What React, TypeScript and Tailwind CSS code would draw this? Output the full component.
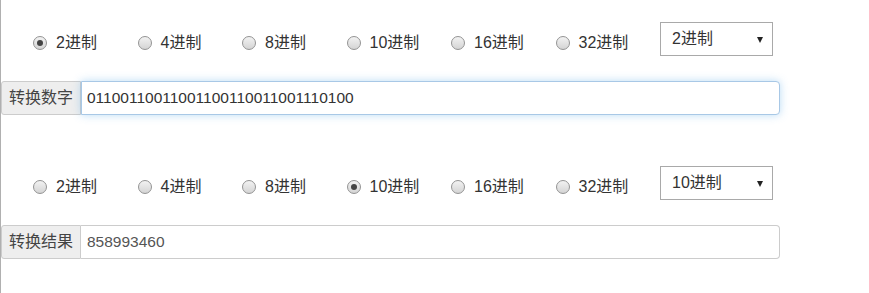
import * as React from "react";

const bases = [2, 4, 8, 10, 16, 32];

function Radio({ checked, label, onPick }: { checked: boolean; label: string; onPick: () => void }) {
  return (
    <label className="mt-[14px] flex w-[104.5px] cursor-pointer items-center" onClick={onPick}>
      <span className="flex h-[14px] w-[14px] items-center justify-center rounded-full border border-[#939393] bg-[linear-gradient(#f2f2f2,#d4d4d4)]">
        {checked && <span className="h-[6px] w-[6px] rounded-full bg-[#444]" />}
      </span>
      <span className="ml-[9px] text-[16px] leading-[14px] text-[#333]">{label}</span>
    </label>
  );
}

function BaseRow({ value, onChange }: { value: number; onChange: (v: number) => void }) {
  return (
    <div className="flex h-[34px] items-start pl-[32px]">
      {bases.map((b) => (
        <Radio key={b} checked={b === value} label={`${b}进制`} onPick={() => onChange(b)} />
      ))}
      <div className="relative flex h-[34px] w-[113px] items-center border border-[#a9a9a9] bg-white pl-[11px] text-[16px] text-[#333]">
        {value}进制
        <span className="absolute right-[9px] top-[14px] h-0 w-0 border-x-[3.5px] border-t-[6px] border-x-transparent border-t-[#222]" />
      </div>
    </div>
  );
}

function Field({ label, value, focused }: { label: string; value: string; focused?: boolean }) {
  return (
    <div className="flex h-[34px] w-[779px]">
      <span className="flex w-[80px] items-center justify-center rounded-l-[3px] border border-[#cccccc] bg-[#eeeeee] text-[16px] text-[#444]">
        {label}
      </span>
      <div
        className={
          focused
            ? "flex flex-1 items-center rounded-r-[4px] border border-[#a8c8e6] bg-white pl-[5px] text-[15.5px] text-[#333] shadow-[0_0_8px_rgba(102,175,233,0.45)]"
            : "flex flex-1 items-center rounded-r-[4px] border border-l-0 border-[#cccccc] bg-white pl-[6px] text-[15.5px] text-[#555]"
        }
      >
        {value}
      </div>
    </div>
  );
}

export default function App() {
  const [from, setFrom] = React.useState(2);
  const [to, setTo] = React.useState(10);

  return (
    <div
      className="h-[293px] w-[869px] border-l border-[#b0b0b0] bg-white pt-[22px]"
      style={{ fontFamily: '"Liberation Sans", "Noto Sans CJK SC", sans-serif' }}
    >
      <BaseRow value={from} onChange={setFrom} />
      <div className="mt-[25px]">
        <Field label="转换数字" value="01100110011001100110011001110100" focused />
      </div>
      <div className="mt-[51px]">
        <BaseRow value={to} onChange={setTo} />
      </div>
      <div className="mt-[25px]">
        <Field label="转换结果" value="858993460" />
      </div>
    </div>
  );
}
